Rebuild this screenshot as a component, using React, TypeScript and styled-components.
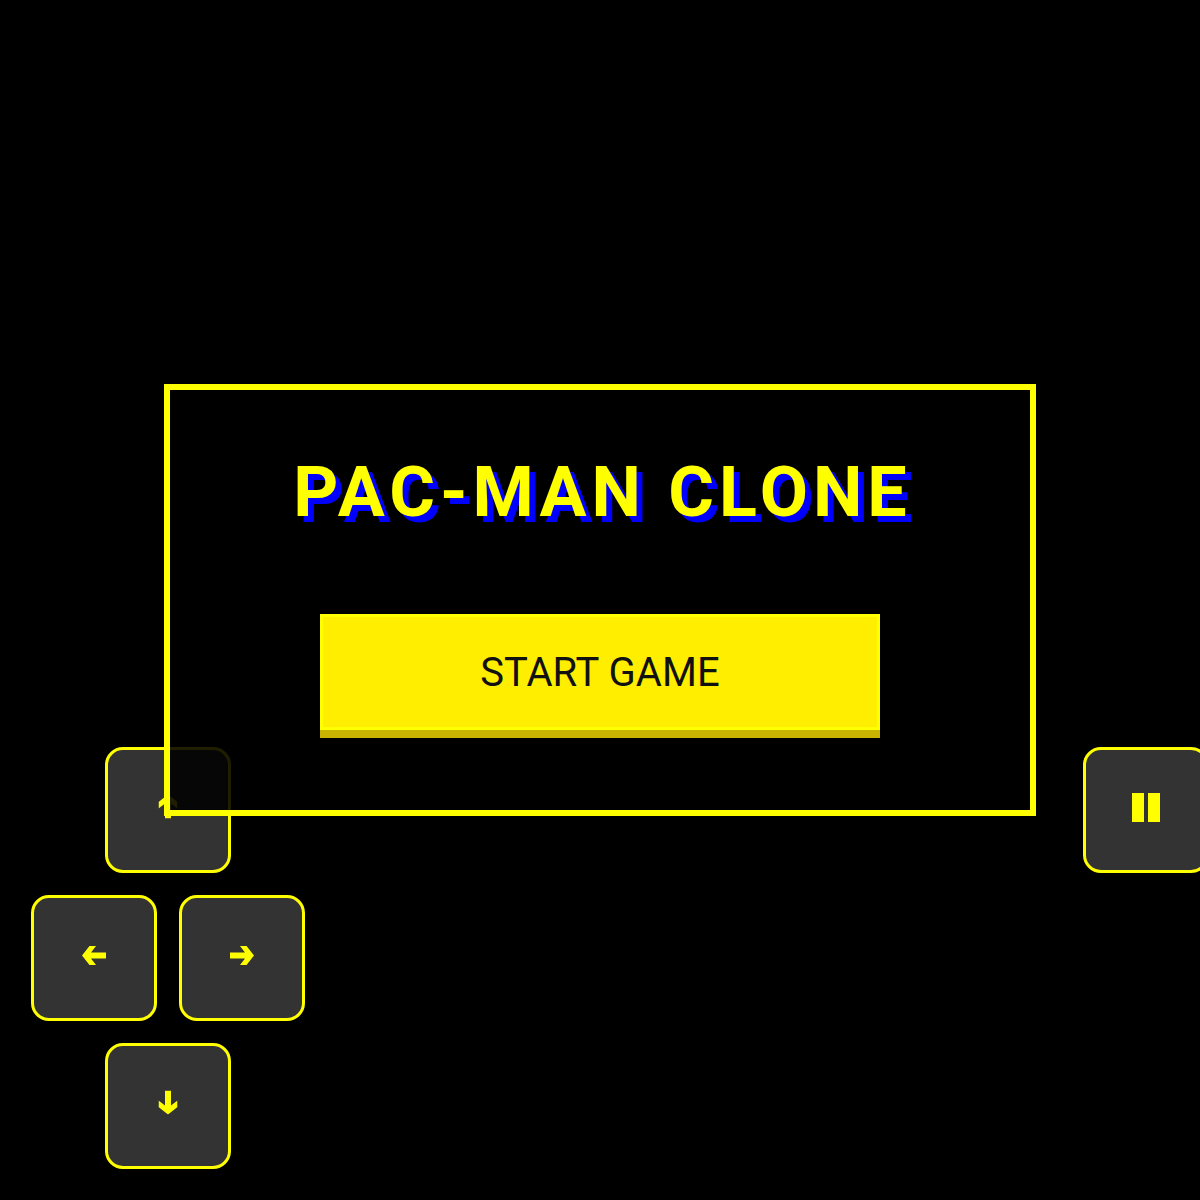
import React from "react";
import styled, { createGlobalStyle } from "styled-components";

const GlobalStyle = createGlobalStyle`
  html, body {
    margin: 0;
    padding: 0;
    background: #000000;
    overflow: hidden;
  }
  body {
    font-family: Roboto, "Liberation Sans", Arial, sans-serif;
  }
`;

const Stage = styled.div`
  position: relative;
  width: 100vw;
  height: 100vh;
  background: #000000;
  overflow: hidden;
`;

const ControlsBar = styled.div`
  position: absolute;
  left: 31px;
  right: -9px;
  bottom: 31px;
  display: flex;
  justify-content: space-between;
  align-items: flex-start;
`;

const DPad = styled.div`
  display: flex;
  flex-direction: column;
  align-items: center;
  gap: 22px;
`;

const DPadRow = styled.div`
  display: flex;
  gap: 22px;
`;

const ControlButton = styled.button`
  box-sizing: border-box;
  width: 126px;
  height: 126px;
  display: flex;
  align-items: center;
  justify-content: center;
  padding: 0;
  background: #333333;
  border: 3px solid #ffff00;
  border-radius: 18px;
  color: #ffff00;
  cursor: pointer;
`;

type Direction = "left" | "right" | "up" | "down";

const rotation: Record<Direction, number> = {
  left: 0,
  up: 90,
  right: 180,
  down: 270,
};

const ArrowSvg = styled.svg<{ $dir: Direction }>`
  width: 24px;
  height: 19px;
  fill: #ffff00;
  transform: translateY(${({ $dir }) => ($dir === "left" || $dir === "right" ? -3 : -4)}px)
    rotate(${({ $dir }) => rotation[$dir]}deg);
`;

const Arrow: React.FC<{ dir: Direction }> = ({ dir }) => (
  <ArrowSvg $dir={dir} viewBox="0 0 24 19">
    <polygon points="0,9.5 7.5,0 14,0 9,6.5 24,6.5 24,12.5 9,12.5 14,19 7.5,19" />
  </ArrowSvg>
);

const PauseIcon = styled.svg`
  width: 28px;
  height: 29px;
  fill: #ffff00;
  transform: translateY(-3px);
`;

const Overlay = styled.div`
  position: absolute;
  left: 50%;
  top: 50%;
  transform: translate(-50%, -50%);
  box-sizing: border-box;
  width: 872px;
  height: 432px;
  border: 6px solid #ffff00;
  background: rgba(0, 0, 0, 0.88);
  display: flex;
  flex-direction: column;
  align-items: center;
  padding-top: 67px;
`;

const Title = styled.h1`
  margin: 0 0 0 5px;
  font-family: Roboto, "Liberation Sans", Arial, sans-serif;
  font-weight: 700;
  font-size: 70px;
  line-height: 1;
  letter-spacing: 5px;
  color: #ffff00;
  text-shadow: 6px 6px 0 #0000ff;
`;

const StartButton = styled.button`
  box-sizing: border-box;
  margin-top: 87px;
  width: 560px;
  height: 116px;
  background: #ffee00;
  border: 3px solid #ffff00;
  box-shadow: 0 8px 0 #c8b400;
  font-family: Roboto, "Liberation Sans", Arial, sans-serif;
  font-size: 40px;
  font-weight: 400;
  color: #111111;
  cursor: pointer;
`;

const App: React.FC = () => {
  return (
    <Stage>
      <GlobalStyle />
      <ControlsBar>
        <DPad>
          <ControlButton aria-label="up">
            <Arrow dir="up" />
          </ControlButton>
          <DPadRow>
            <ControlButton aria-label="left">
              <Arrow dir="left" />
            </ControlButton>
            <ControlButton aria-label="right">
              <Arrow dir="right" />
            </ControlButton>
          </DPadRow>
          <ControlButton aria-label="down">
            <Arrow dir="down" />
          </ControlButton>
        </DPad>
        <ControlButton aria-label="pause">
          <PauseIcon viewBox="0 0 28 29">
            <rect x="0" y="0" width="12" height="29" />
            <rect x="16" y="0" width="12" height="29" />
          </PauseIcon>
        </ControlButton>
      </ControlsBar>
      <Overlay>
        <Title>PAC-MAN CLONE</Title>
        <StartButton>START GAME</StartButton>
      </Overlay>
    </Stage>
  );
};

export default App;
